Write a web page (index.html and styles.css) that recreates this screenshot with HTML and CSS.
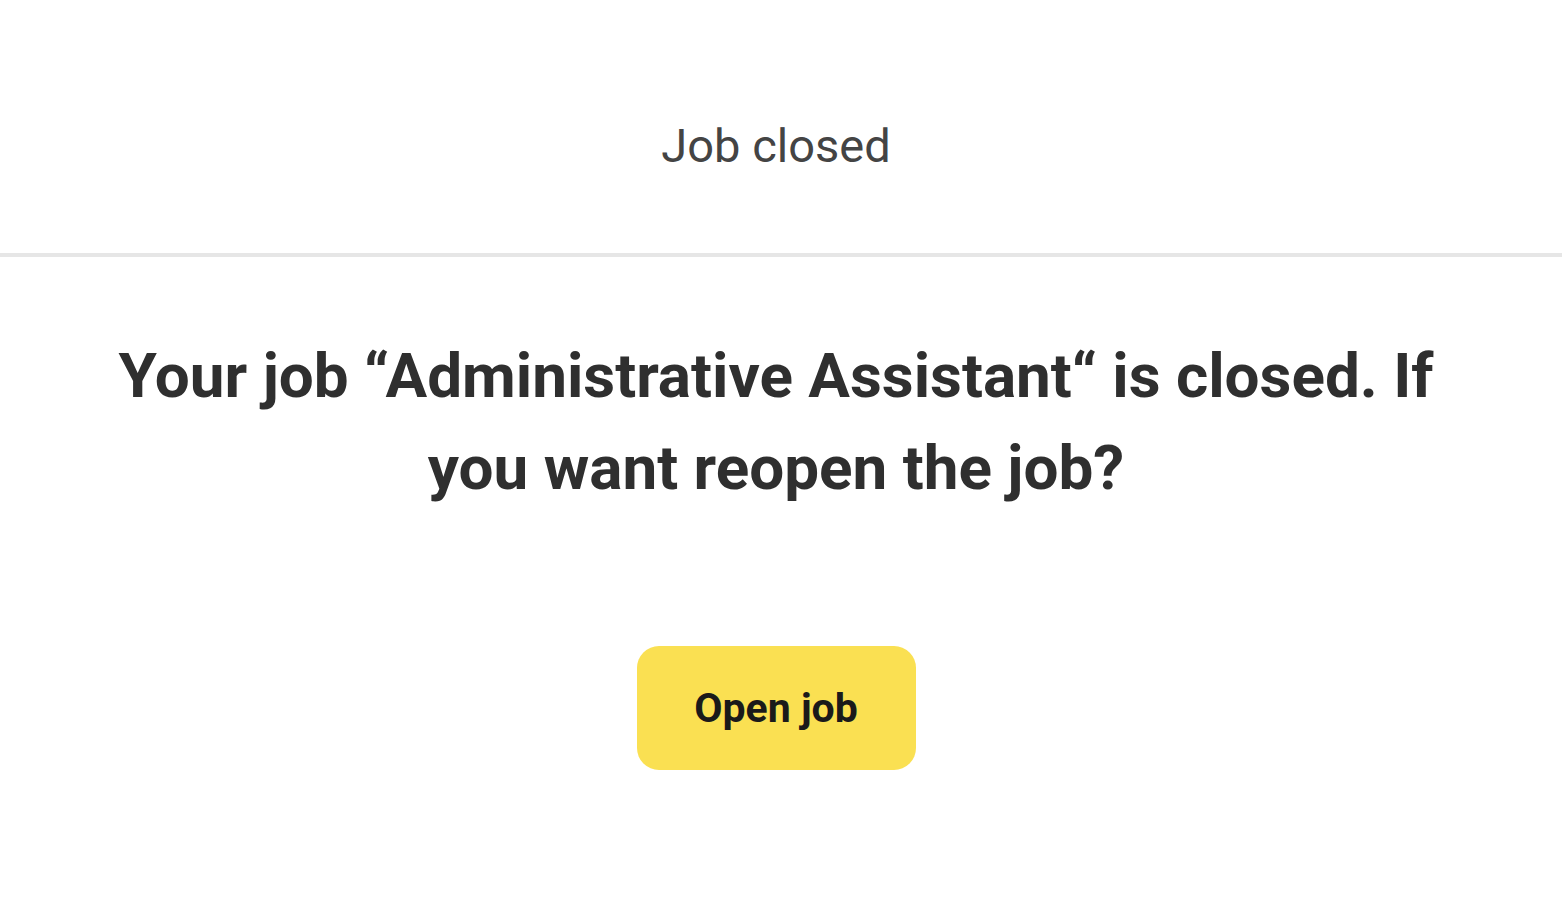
FILE: index.html
```html
<!DOCTYPE html>
<html lang="en">
<head>
  <meta charset="utf-8">
  <meta name="viewport" content="width=device-width, initial-scale=1">
  <title>Job closed</title>
  <link rel="stylesheet" href="styles.css">
</head>
<body>
  <main class="sheet">
    <header class="sheet-header">
      <h1>Job closed</h1>
    </header>
    <section class="sheet-body">
      <h2>Your job “Administrative Assistant“ is closed. If you want reopen the job?</h2>
      <button class="btn-open" type="button">Open job</button>
    </section>
  </main>
</body>
</html>
```

FILE: styles.css
```css
html,body{
  margin: 0;
  padding: 0;
  background: #fff;
  font-family: Roboto, "Helvetica", "Arial", sans-serif;
}
.sheet{
  width: 100%;
}
.sheet-header{
  padding: 114px 10px 75px 0;
  border-bottom: 4px solid #e6e6e6;
  text-align: center;
}
.sheet-header h1{
  margin: 0;
  font-size: 47px;
  line-height: 64px;
  font-weight: 400;
  color: #444;
}
.sheet-body{
  display: flex;
  flex-direction: column;
  align-items: center;
  padding: 73px 74px 0 64px;
}
.sheet-body h2{
  margin: 0;
  font-size: 62px;
  line-height: 92px;
  font-weight: 700;
  color: #2f2f2f;
  text-align: center;
}
.btn-open{
  margin-top: 132px;
  width: 279px;
  height: 124px;
  border: 0;
  border-radius: 22px;
  background: #fae052;
  color: #1a1a1a;
  font-family: Roboto, "Helvetica", "Arial", sans-serif;
  font-size: 41px;
  font-weight: 700;
  cursor: pointer;
}
```
